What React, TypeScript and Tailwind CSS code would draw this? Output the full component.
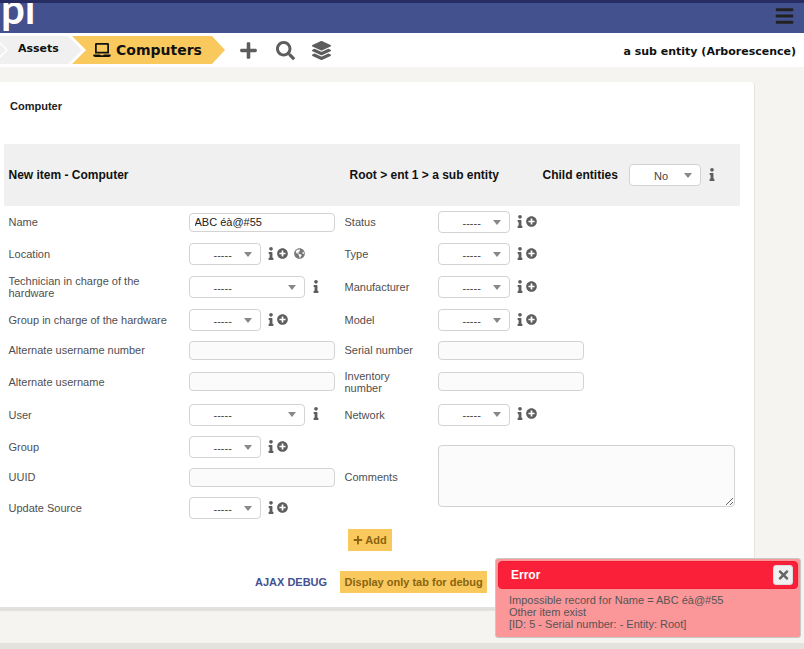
import { FaBars, FaGlobeAmericas, FaInfo, FaLaptop, FaLayerGroup, FaPlus, FaPlusCircle, FaSearch, FaTimes } from "react-icons/fa";

const Select = ({ wide, value = "-----" }: { wide?: boolean; value?: string }) => (
  <div className={`flex h-[22px] items-center justify-between rounded-[4px] border border-[#d3d3d3] bg-white pl-[24px] pr-[8px] text-[11px] text-[#444] ${wide ? "w-[116px]" : "w-[72px]"}`}>
    <span className="relative top-[1px]">{value}</span>
    <span className="h-0 w-0 border-x-[4px] border-t-[5px] border-x-transparent border-t-[#888]" />
  </div>
);

const Info = () => <FaInfo className="h-[13px] w-[8px] text-[#5d5d5d]" />;

const Tools = ({ globe }: { globe?: boolean }) => (
  <div className="relative -top-[1px] ml-[6px] flex items-center gap-[2px]">
    <Info />
    <FaPlusCircle className="h-[11px] w-[11px] text-[#5d5d5d]" />
    {globe && <FaGlobeAmericas className="ml-[4px] h-[11px] w-[11px] text-[#777]" />}
  </div>
);

const Field = ({ wide, globe, info }: { wide?: boolean; globe?: boolean; info?: boolean }) => (
  <div className="flex items-center">
    <Select wide={wide} />
    {info ? (
      <div className="relative -top-[1px] ml-[7px]">
        <Info />
      </div>
    ) : (
      <Tools globe={globe} />
    )}
  </div>
);

const Input = ({ value, white }: { value?: string; white?: boolean }) => (
  <input
    readOnly
    value={value ?? ""}
    className={`h-[19px] w-[146px] rounded-[4px] border border-[#d3d3d3] px-[5px] text-[11px] text-[#222] outline-none ${white ? "bg-white" : "bg-[#fbfbfb]"}`}
  />
);

const Label = ({ children }: { children: React.ReactNode }) => <div className="pr-[6px] leading-[12px]">{children}</div>;

export default function App() {
  return (
    <div className="relative h-[649px] w-[804px] overflow-hidden bg-[#f5f4f0] font-['Liberation_Sans',sans-serif] text-[11px] text-[#4f4f4f]">
      {/* top bar */}
      <header className="relative flex h-[33px] items-start justify-between overflow-hidden border-t-[3px] border-[#272c62] bg-[#43528f]">
        <span className="-mt-[20px] ml-[1px] font-['Lato',sans-serif] text-[42px] leading-[50px] font-bold text-white">pi</span>
        <FaBars className="mt-[3px] mr-[10px] h-[20px] w-[19px] text-[#222]" />
      </header>

      {/* breadcrumbs */}
      <div className="flex h-[34px] items-start justify-between bg-white pt-[3px] pr-[8px] font-['DejaVu_Sans',sans-serif]">
        <div className="flex items-center">
          <div className="h-[28px] w-[6px] bg-[#f0f0f0] [clip-path:polygon(0_8px,6px_14px,0_20px)]" />
          <div className="-ml-[6px] flex h-[28px] w-[82px] items-center bg-[#f0f0f0] pb-[2px] pl-[18px] text-[11px] font-bold text-[#111] [clip-path:polygon(0_0,68px_0,82px_14px,68px_28px,0_28px,0_22px,8px_14px,0_6px)]">
            Assets
          </div>
          <div className="-ml-[10px] flex h-[28px] w-[153px] items-center gap-[5px] bg-[#f9c95e] pl-[21px] text-[14px] font-bold text-[#111] [clip-path:polygon(0_0,140px_0,153px_14px,140px_28px,0_28px,14px_14px)]">
            <FaLaptop className="h-[14px] w-[18px]" />
            <span>Computers</span>
          </div>
          <div className="ml-[14px] flex items-center gap-[17px] text-[#5d5d5d]">
            <FaPlus className="mr-[1px] h-[19px] w-[19px]" />
            <FaSearch className="h-[19px] w-[19px]" />
            <FaLayerGroup className="h-[19px] w-[19px]" />
          </div>
        </div>
        <span className="mt-[8px] text-[11px] font-bold text-[#111]">a sub entity (Arborescence)</span>
      </div>

      {/* card */}
      <main className="mt-[15px] h-[529px] w-[755px] rounded-tr-[4px] border-r border-b-[4px] border-r-[#e5e4e0] border-b-[#e2e1dd] bg-white">
        <div className="pt-[18px] pl-[10px] text-[11px] leading-[13px] font-bold text-[#222]">Computer</div>

        <div className="mt-[31px] ml-[4px] w-[736px]">
          <div className="flex h-[62px] items-center bg-[#f0f0f0] pl-[4.5px] text-[12px] font-bold text-[#111]">
            <div className="w-[341px]">New item - Computer</div>
            <div className="w-[193px]">Root &gt; ent 1 &gt; a sub entity</div>
            <div className="w-[86.5px]">Child entities</div>
            <div className="font-normal">
              <Select value="No" />
            </div>
            <div className="relative -top-[1px] ml-[7px]">
              <Info />
            </div>
          </div>

          <div className="grid grid-cols-[180px_156px_93px_1fr] grid-rows-[32px_32px_34px_32px_29px_33px_33px_32px_28px_34px] items-center pl-[4.5px]">
            <Label>Name</Label>
            <Input value="ABC éà@#55" white />
            <Label>Status</Label>
            <Field />

            <Label>Location</Label>
            <Field globe />
            <Label>Type</Label>
            <Field />

            <Label>Technician in charge of the hardware</Label>
            <Field wide info />
            <Label>Manufacturer</Label>
            <Field />

            <Label>Group in charge of the hardware</Label>
            <Field />
            <Label>Model</Label>
            <Field />

            <div className="-mt-[2px]">
              <Label>Alternate username number</Label>
            </div>
            <Input />
            <div className="-mt-[2px]">
              <Label>Serial number</Label>
            </div>
            <Input />

            <Label>Alternate username</Label>
            <Input />
            <div className="w-[70px] leading-[12px]">Inventory number</div>
            <Input />

            <Label>User</Label>
            <Field wide info />
            <Label>Network</Label>
            <Field />

            <Label>Group</Label>
            <Field />
            <div className="col-start-3 row-span-3 row-start-8 -mt-[2px]">Comments</div>
            <textarea
              readOnly
              className="col-start-4 row-span-3 row-start-8 -mt-[4px] h-[62px] w-[297px] rounded-[4px] border border-[#d3d3d3] bg-[#fbfbfb] outline-none"
            />

            <div className="col-start-1 row-start-9">
              <Label>UUID</Label>
            </div>
            <div className="col-start-2 row-start-9">
              <Input />
            </div>

            <div className="col-start-1 row-start-10">
              <Label>Update Source</Label>
            </div>
            <div className="col-start-2 row-start-10">
              <Field />
            </div>
          </div>

          <div className="mt-[4px] ml-[344px] flex h-[22px] w-[44px] items-center justify-center gap-[2px] bg-[#f9c95e] font-bold text-[#8a6410]">
            <FaPlus className="h-[10px] w-[10px]" />
            Add
          </div>
        </div>

        <div className="mt-[20px] flex items-center pl-[255px] font-bold">
          <span className="text-[#43528f]">AJAX DEBUG</span>
          <span className="ml-[13px] flex h-[22px] w-[147px] items-center justify-center bg-[#f9c95e] text-[#8a6410]">Display only tab for debug</span>
        </div>
      </main>

      <div className="absolute bottom-0 h-[6px] w-full bg-[#e3e2dd]" />

      {/* error toast */}
      <div className="absolute top-[558px] left-[495px] h-[80px] w-[306px] rounded-[3px] border border-[#c8c8c8] bg-[#fb9699] p-[2px]">
        <div className="flex h-[28px] items-center justify-between rounded-[4px] border border-[#f01a33] bg-[#fb2039] pr-[4px] pl-[12px] text-[12px] font-bold text-white">
          Error
          <span className="flex h-[20px] w-[20px] items-center justify-center rounded-[3px] border border-[#ddd] bg-[#f0f0f0]">
            <FaTimes className="h-[14px] w-[11px] text-[#666]" />
          </span>
        </div>
        <div className="pt-[5px] pl-[11px] text-[11px] leading-[12px] text-[#555]">
          Impossible record for Name = ABC éà@#55
          <br />
          Other item exist
          <br />
          [ID: 5 - Serial number: - Entity: Root]
        </div>
      </div>
    </div>
  );
}
